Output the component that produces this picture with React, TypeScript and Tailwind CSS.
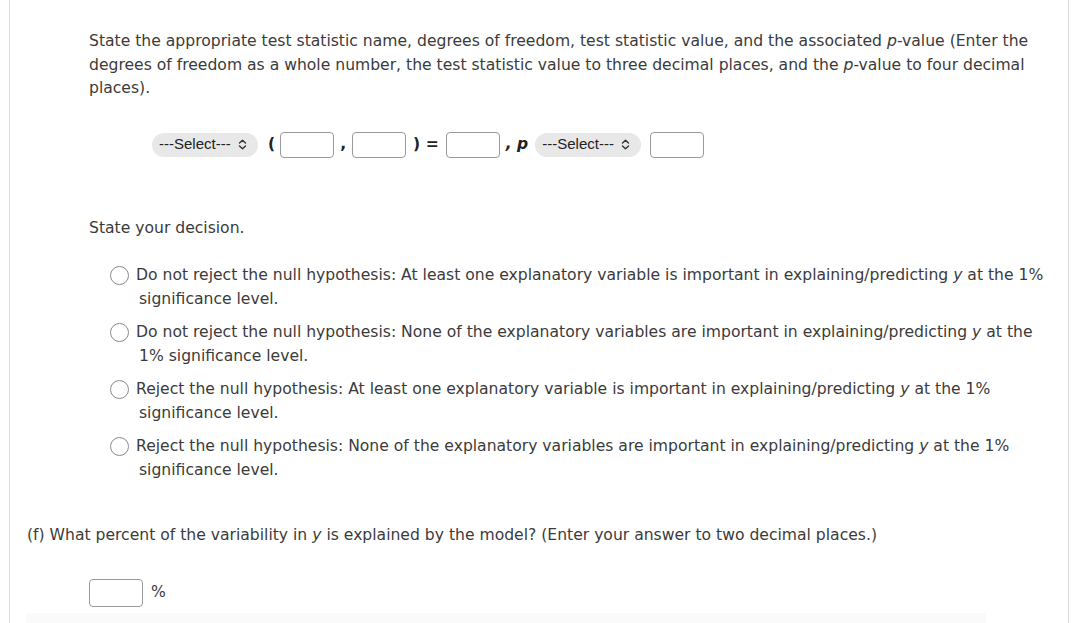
import React from "react";

const textFont = { fontFamily: '"DejaVu Sans", Verdana, sans-serif' };

function SelectPill() {
  return (
    <div
      className="flex h-6 w-[106px] items-center justify-between rounded-full bg-[#e8e8e8] pl-[7px] pr-[11px] text-[15px] text-[#222]"
      style={{ fontFamily: '"Liberation Sans", Arial, sans-serif' }}
    >
      <span>---Select---</span>
      <svg width="9" height="11" viewBox="0 0 9 11" fill="none" stroke="#333" strokeWidth="1.4" strokeLinecap="round" strokeLinejoin="round">
        <path d="M1.5 4 L4.5 1.2 L7.5 4" />
        <path d="M1.5 7 L4.5 9.8 L7.5 7" />
      </svg>
    </div>
  );
}

function Box({ h = "h-[26px]" }: { h?: string }) {
  return <div className={`w-[54px] ${h} rounded-[4px] border border-[#9a9a9a] bg-white`} />;
}

function Radio({ children }: { children: React.ReactNode }) {
  return (
    <div className="flex items-start">
      <div className="mt-[3px] h-[19px] w-[19px] shrink-0 rounded-full border-[1.5px] border-[#8a8a8a] bg-white" />
      <p className="ml-[10px] w-[911px] indent-[-3px] leading-[24px]">{children}</p>
    </div>
  );
}

export default function App() {
  return (
    <div className="h-[623px] w-full overflow-hidden bg-white text-[15.6px] text-[#3b3b3b]" style={textFont}>
      <div className="ml-[9px] flex h-full w-[1060px] flex-col border-x border-[#dcdcdc] px-[17px]">
        <div className="pl-[62px] pt-[30px]">
          <p className="w-[962px] leading-[23.5px]">
            State the appropriate test statistic name, degrees of freedom, test statistic value, and the associated{" "}
            <i>p</i>-value (Enter the degrees of freedom as a whole number, the test statistic value to three decimal places, and
            the <i>p</i>-value to four decimal places).
          </p>

          <div className="mt-[31px] flex items-center pl-[63px] text-[#222]">
            <SelectPill />
            <span className="ml-[10px] font-bold">(</span>
            <div className="ml-[5px]"><Box /></div>
            <span className="ml-[6px] font-bold">,</span>
            <div className="ml-[6px]"><Box /></div>
            <span className="ml-[7px] font-bold">) =</span>
            <div className="ml-[7px]"><Box /></div>
            <span className="ml-[6px] font-bold italic">, p</span>
            <div className="ml-[7px]"><SelectPill /></div>
            <div className="ml-[9px]"><Box /></div>
          </div>

          <p className="mt-[58px] leading-[24px]">State your decision.</p>

          <div className="mt-[23px] flex flex-col gap-[9px] pl-[21px]">
            <Radio>
              Do not reject the null hypothesis: At least one explanatory variable is important in explaining/predicting <i>y</i> at the 1%
              significance level.
            </Radio>
            <Radio>
              Do not reject the null hypothesis: None of the explanatory variables are important in explaining/predicting <i>y</i> at the
              1% significance level.
            </Radio>
            <Radio>
              Reject the null hypothesis: At least one explanatory variable is important in explaining/predicting <i>y</i> at the 1%
              significance level.
            </Radio>
            <Radio>
              Reject the null hypothesis: None of the explanatory variables are important in explaining/predicting <i>y</i> at the 1%
              significance level.
            </Radio>
          </div>
        </div>

        <p className="mt-[41px] leading-[24px]">
          (f) What percent of the variability in <i>y</i> is explained by the model? (Enter your answer to two decimal places.)
        </p>

        <div className="mt-[32px] flex items-center pl-[62px]">
          <Box h="h-[28px]" />
          <span className="ml-[8px]">%</span>
        </div>

        <div className="mt-[6px] ml-[-1px] h-[12px] w-[960px] bg-[#fafafa]" />
      </div>
    </div>
  );
}
